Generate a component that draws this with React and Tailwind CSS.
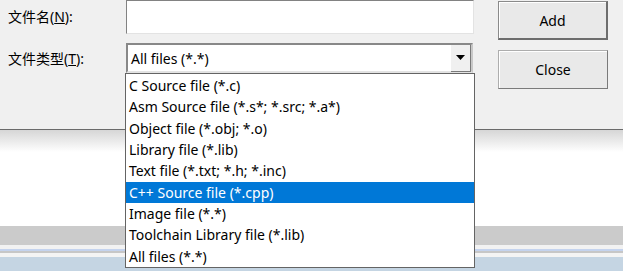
import React from 'react';

const font = { fontFamily: '"Noto Sans", "Noto Sans CJK SC", sans-serif' };

const fileTypes = [
    'C Source file (*.c)',
    'Asm Source file (*.s*; *.src; *.a*)',
    'Object file (*.obj; *.o)',
    'Library file (*.lib)',
    'Text file (*.txt; *.h; *.inc)',
    'C++ Source file (*.cpp)',
    'Image file (*.*)',
    'Toolchain Library file (*.lib)',
    'All files (*.*)',
];

const selected = 5;

const WinButton = ({ children, isDefault }) => (
    <button
        className={`w-[110px] h-[39px] bg-[#e9e9e9] text-[14px] text-black flex items-center justify-center border ${isDefault ? 'border-[#6d6d6d] border-b-2 border-r-2 border-t-[#8a8a8a] border-l-[#8a8a8a]' : 'border-[#adadad] border-b-[#7a7a7a] border-r-[#7a7a7a]'} shadow-[inset_1px_1px_0_#ffffff]`}>
        {children}
    </button>
);

export default function App() {
    return (
        <div className="relative w-[623px] h-[271px] overflow-hidden bg-white" style={font}>
            {/* dialog */}
            <div className="h-[130px] bg-[#f0f0f0] border-b border-[#6a6a6a] flex">
                <div className="w-[126px] pl-2 text-[14px] text-black">
                    <div className="h-[33px] flex items-center">文件名(<span className="underline">N</span>):</div>
                    <div className="h-[10px]" />
                    <div className="h-[30px] flex items-center">文件类型(<span className="underline">T</span>):</div>
                </div>
                <div className="w-[348px]">
                    <div className="h-[34px] bg-white border border-[#a0a0a0] border-b-[#e3e3e3] border-r-[#e3e3e3] border-t-[#828282] border-l-[#828282]" />
                    <div className="h-[9px]" />
                    <div className="h-[30px] w-[347px] bg-white border-2 border-[#888888] border-b-[#e3e3e3] border-r-[#c8c8c8] flex items-center justify-between">
                        <span className="pl-[3px] text-[14px] text-black">All files (*.*)</span>
                        <span className="w-[20px] h-[27px] bg-[#f0f0f0] border-r border-b border-[#7a7a7a] flex items-center justify-center">
                            <svg width="9" height="5" viewBox="0 0 9 5"><path d="M0 0h9L4.5 5z" fill="#000" /></svg>
                        </span>
                    </div>
                </div>
                <div className="pl-[24px] pt-[1px] flex flex-col gap-[10px]">
                    <WinButton isDefault>Add</WinButton>
                    <WinButton>Close</WinButton>
                </div>
                <div className="flex-1" />
            </div>
            {/* window below */}
            <div className="h-[22px] bg-gradient-to-b from-[#d6d6d6] to-white" />
            <div className="h-[74px]" />
            <div className="h-[19px] bg-[#cbcbcb]" />
            <div className="h-[4px] bg-[#f2f2f2]" />
            <div className="h-[2px] bg-[#c4d3ee]" />
            <div className="h-[2px] bg-[#c7c7c7]" />
            <div className="h-[4px] bg-[#f4f4f4]" />
            <div className="h-[14px] bg-[#c5d5e3]" />

            {/* dropdown list */}
            <div className="absolute left-[125px] top-[73px] w-[350px] h-[195px] bg-white border border-[#646464] pt-[1px]">
                {fileTypes.map((t, i) => (
                    <div key={t}
                        className={`h-[21.33px] pl-[3px] text-[14px] flex items-center whitespace-nowrap ${i === selected ? 'bg-[#0078d7] text-white' : 'text-black'}`}>
                        {t}
                    </div>
                ))}
            </div>
        </div>
    );
}
